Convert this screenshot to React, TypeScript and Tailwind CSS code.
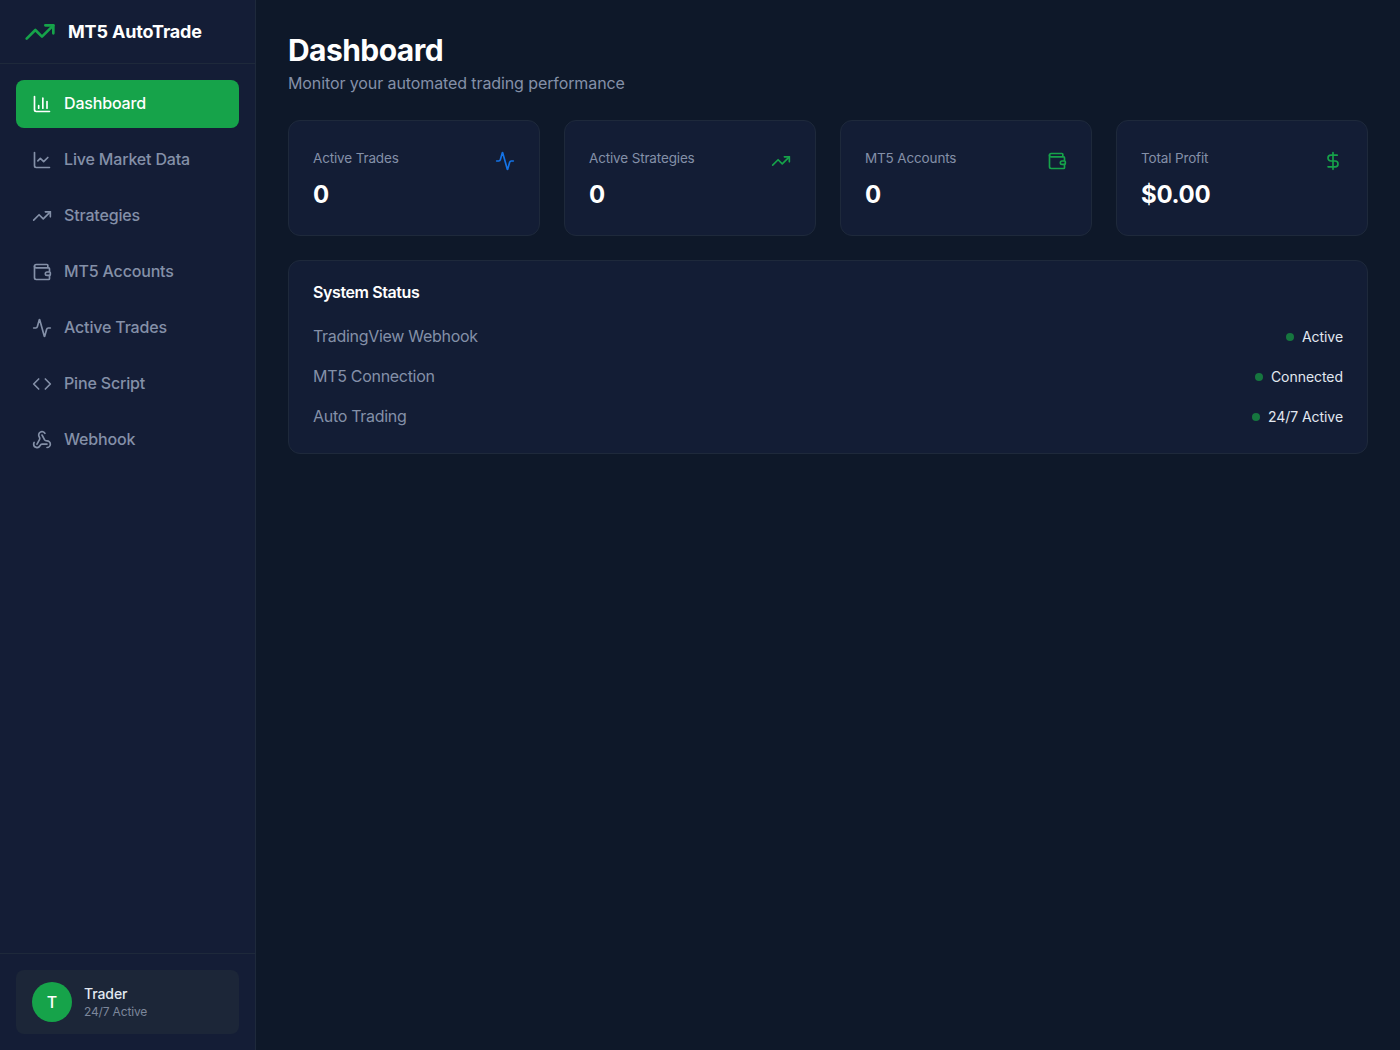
import { Activity, ChartColumn, ChartLine, Code, DollarSign, TrendingUp, Wallet, Webhook } from "lucide-react";

const nav = [
  { label: "Dashboard", icon: ChartColumn, active: true },
  { label: "Live Market Data", icon: ChartLine },
  { label: "Strategies", icon: TrendingUp },
  { label: "MT5 Accounts", icon: Wallet },
  { label: "Active Trades", icon: Activity },
  { label: "Pine Script", icon: Code },
  { label: "Webhook", icon: Webhook },
];

const stats = [
  { label: "Active Trades", value: "0", icon: Activity, color: "text-[#1473e6]" },
  { label: "Active Strategies", value: "0", icon: TrendingUp, color: "text-[#16a34a]" },
  { label: "MT5 Accounts", value: "0", icon: Wallet, color: "text-[#16a34a]" },
  { label: "Total Profit", value: "$0.00", icon: DollarSign, color: "text-[#16a34a]" },
];

const status = [
  { label: "TradingView Webhook", value: "Active" },
  { label: "MT5 Connection", value: "Connected" },
  { label: "Auto Trading", value: "24/7 Active" },
];

function Sidebar() {
  return (
    <aside className="flex h-full w-64 shrink-0 flex-col border-r border-[#1e293b] bg-[#141d36]">
      <div className="flex h-16 items-center gap-3 border-b border-[#1e293b] px-6">
        <TrendingUp className="h-8 w-8 text-[#16a34a]" />
        <span className="text-lg font-bold tracking-[-0.15px] text-white">MT5 AutoTrade</span>
      </div>

      <nav className="flex flex-1 flex-col gap-2 p-4">
        {nav.map((item) => (
          <div
            key={item.label}
            className={
              item.active
                ? "flex h-12 items-center gap-3 rounded-lg bg-[#16a34a] px-4 font-medium text-white"
                : "flex h-12 items-center gap-3 rounded-lg px-4 font-medium text-[#8490a8]"
            }
          >
            <item.icon className="h-5 w-5" />
            <span className="pb-[2px] tracking-[-0.17px]">{item.label}</span>
          </div>
        ))}
      </nav>

      <div className="border-t border-[#1e293b] p-4">
        <div className="flex h-16 items-center gap-3 rounded-lg bg-[#1c2638] px-4">
          <div className="flex h-10 w-10 items-center justify-center rounded-full bg-[#16a34a] font-medium text-white">
            T
          </div>
          <div>
            <p className="text-sm font-medium leading-5 tracking-[-0.1px] text-[#e2e8f0]">Trader</p>
            <p className="text-xs leading-4 tracking-[-0.15px] text-[#7c879b]">24/7 Active</p>
          </div>
        </div>
      </div>
    </aside>
  );
}

export default function App() {
  return (
    <div className="flex h-screen bg-[#0e1829] font-['Inter','Liberation_Sans',sans-serif]">
      <Sidebar />
      <main className="flex-1 p-8">
        <h1 className="text-3xl font-bold leading-9 tracking-[-0.55px] text-white">Dashboard</h1>
        <p className="mt-[3px] text-base leading-6 tracking-[-0.1px] text-[#8490a8]">
          Monitor your automated trading performance
        </p>

        <div className="mt-[25px] grid grid-cols-4 gap-6">
          {stats.map((s) => (
            <div key={s.label} className="h-[116px] rounded-xl border border-[#1e293b] bg-[#131d35] p-6">
              <div className="flex items-start justify-between">
                <div>
                  <p className="mt-[3px] text-[13.5px] leading-5 tracking-[-0.15px] text-[#8490a8]">{s.label}</p>
                  <p className="mt-[11px] text-2xl font-bold leading-8 tracking-[-0.3px] text-white">{s.value}</p>
                </div>
                <s.icon className={`mt-[6px] h-5 w-5 ${s.color}`} />
              </div>
            </div>
          ))}
        </div>

        <section className="mt-6 rounded-xl border border-[#1e293b] bg-[#131d35] p-6">
          <h2 className="font-semibold leading-[14px] tracking-[-0.4px] text-white">System Status</h2>
          <div className="mt-[26px] flex flex-col gap-4">
            {status.map((row) => (
              <div key={row.label} className="flex h-6 items-center justify-between">
                <span className="pb-[2px] tracking-[-0.3px] text-[#8490a8]">{row.label}</span>
                <span className="flex items-center gap-2 text-sm tracking-[-0.05px] text-[#e2e8f0]">
                  <span className="h-2 w-2 rounded-full bg-[#16763f]" />
                  {row.value}
                </span>
              </div>
            ))}
          </div>
        </section>
      </main>
    </div>
  );
}
